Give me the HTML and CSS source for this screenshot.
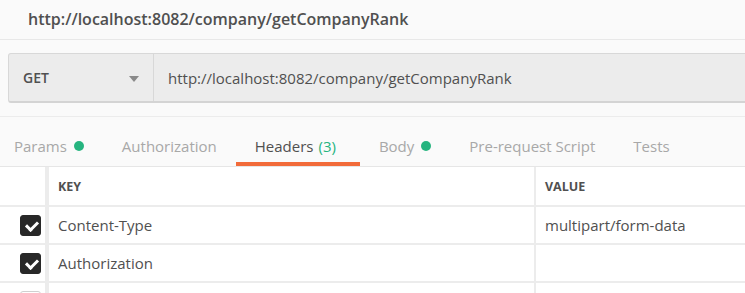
FILE: index.html
```html
<!DOCTYPE html>
<html>
<head>
<meta charset="utf-8">
<link rel="stylesheet" href="styles.css">
</head>
<body>
<div class="title">http://localhost:8082/company/getCompanyRank</div>
<div class="reqwrap">
  <div class="req">
    <div class="method"><span>GET</span><span class="caret"></span></div>
    <div class="url">http://localhost:8082/company/getCompanyRank</div>
  </div>
</div>
<div class="tabs">
  <div class="tab">Params <span class="dot"></span></div>
  <div class="tab">Authorization</div>
  <div class="tab active">Headers <span class="count">(3)</span></div>
  <div class="tab">Body <span class="dot"></span></div>
  <div class="tab">Pre-request Script</div>
  <div class="tab">Tests</div>
</div>
<div class="table">
  <div class="row head">
    <div class="c0"></div>
    <div class="c1">KEY</div>
    <div class="c2">VALUE</div>
  </div>
  <div class="row">
    <div class="c0"><span class="cb on"></span></div>
    <div class="c1">Content-Type</div>
    <div class="c2">multipart/form-data</div>
  </div>
  <div class="row">
    <div class="c0"><span class="cb on"></span></div>
    <div class="c1">Authorization</div>
    <div class="c2"></div>
  </div>
  <div class="row">
    <div class="c0"><span class="cb"></span></div>
    <div class="c1"></div>
    <div class="c2"></div>
  </div>
</div>
</body>
</html>
```
FILE: styles.css
```css
html, body {
  margin: 0;
  padding: 0;
  background: #fafafa;
  font-family: "Open Sans", "Liberation Sans", sans-serif;
  overflow: hidden;
  width: 745px;
  height: 293px;
}
.title {
  height: 40px;
  line-height: 39px;
  padding-left: 28px;
  font-size: 16px;
  font-weight: 600;
  color: #505050;
  border-bottom: 1px solid #e8e8e8;
  box-sizing: border-box;
  white-space: nowrap;
}
.reqwrap {
  padding: 13px 0 0 8px;
  height: 77px;
  box-sizing: border-box;
  border-bottom: 1px solid #ececec;
}
.req {
  display: flex;
  height: 50px;
  width: 800px;
  background: #ececec;
  border: 1px solid #d8d8d8;
  border-bottom: 2px solid #d4d4d4;
  border-radius: 3px 0 0 3px;
  box-sizing: border-box;
}
.method {
  width: 145px;
  flex: none;
  display: flex;
  align-items: center;
  justify-content: space-between;
  padding: 0 14px 0 14px;
  box-sizing: border-box;
  border-right: 1px solid #d8d8d8;
  font-size: 14px;
  font-weight: 600;
  color: #505050;
}
.caret {
  width: 0;
  height: 0;
  border-left: 5px solid transparent;
  border-right: 5px solid transparent;
  border-top: 6px solid #8a8a8a;
  margin-top: 2px;
}
.url {
  display: flex;
  align-items: center;
  padding-left: 14px;
  font-size: 15px;
  color: #505050;
  white-space: nowrap;
}
.tabs {
  display: flex;
  height: 50px;
  margin-left: -5px;
  border-bottom: 1px solid #e6e6e6;
  box-sizing: border-box;
  font-size: 15px;
  color: #a8a8a8;
}
.tab {
  display: flex;
  align-items: center;
  padding: 8px 19px 0 19px;
  height: 100%;
  box-sizing: border-box;
  white-space: nowrap;
}
.tab.active {
  color: #505050;
  border-bottom: 4px solid #f26b3a;
  padding: 12px 24px 0 19px;
}
.dot {
  display: inline-block;
  width: 10px;
  height: 10px;
  border-radius: 50%;
  background: #26b47f;
  margin-left: 7px;
}
.count { color: #26b47f; margin-left: 5px; }
.table {
  background: #fff;
}
.row {
  display: grid;
  grid-template-columns: 49px 487px 1fr;
  height: 38px;
  border-bottom: 2px solid #ececec;
  box-sizing: border-box;
  font-size: 15px;
  color: #505050;
}
.row.head { height: 40px; }
.row > div {
  display: flex;
  align-items: center;
}
.c0 {
  justify-content: flex-end;
  padding-right: 4px;
  border-right: 4px solid #ececec;
}
.c1 {
  padding-left: 9px;
  border-right: 2px solid #ececec;
}
.c2 { padding-left: 9px; }
.head .c1, .head .c2 {
  font-size: 12.5px;
  font-weight: 700;
  color: #505050;
  padding-top: 1px;
}
.cb {
  width: 21px;
  height: 21px;
  border-radius: 3px;
  box-sizing: border-box;
  border: 1px solid #d0d0d0;
  background: #fff;
  position: relative;
}
.cb.on {
  background: #282828;
  border-color: #282828;
}
.cb.on::after {
  content: "";
  position: absolute;
  left: 6.5px;
  top: 3px;
  width: 5px;
  height: 9px;
  border-right: 3px solid #fff;
  border-bottom: 3px solid #fff;
  transform: rotate(45deg);
}
```
